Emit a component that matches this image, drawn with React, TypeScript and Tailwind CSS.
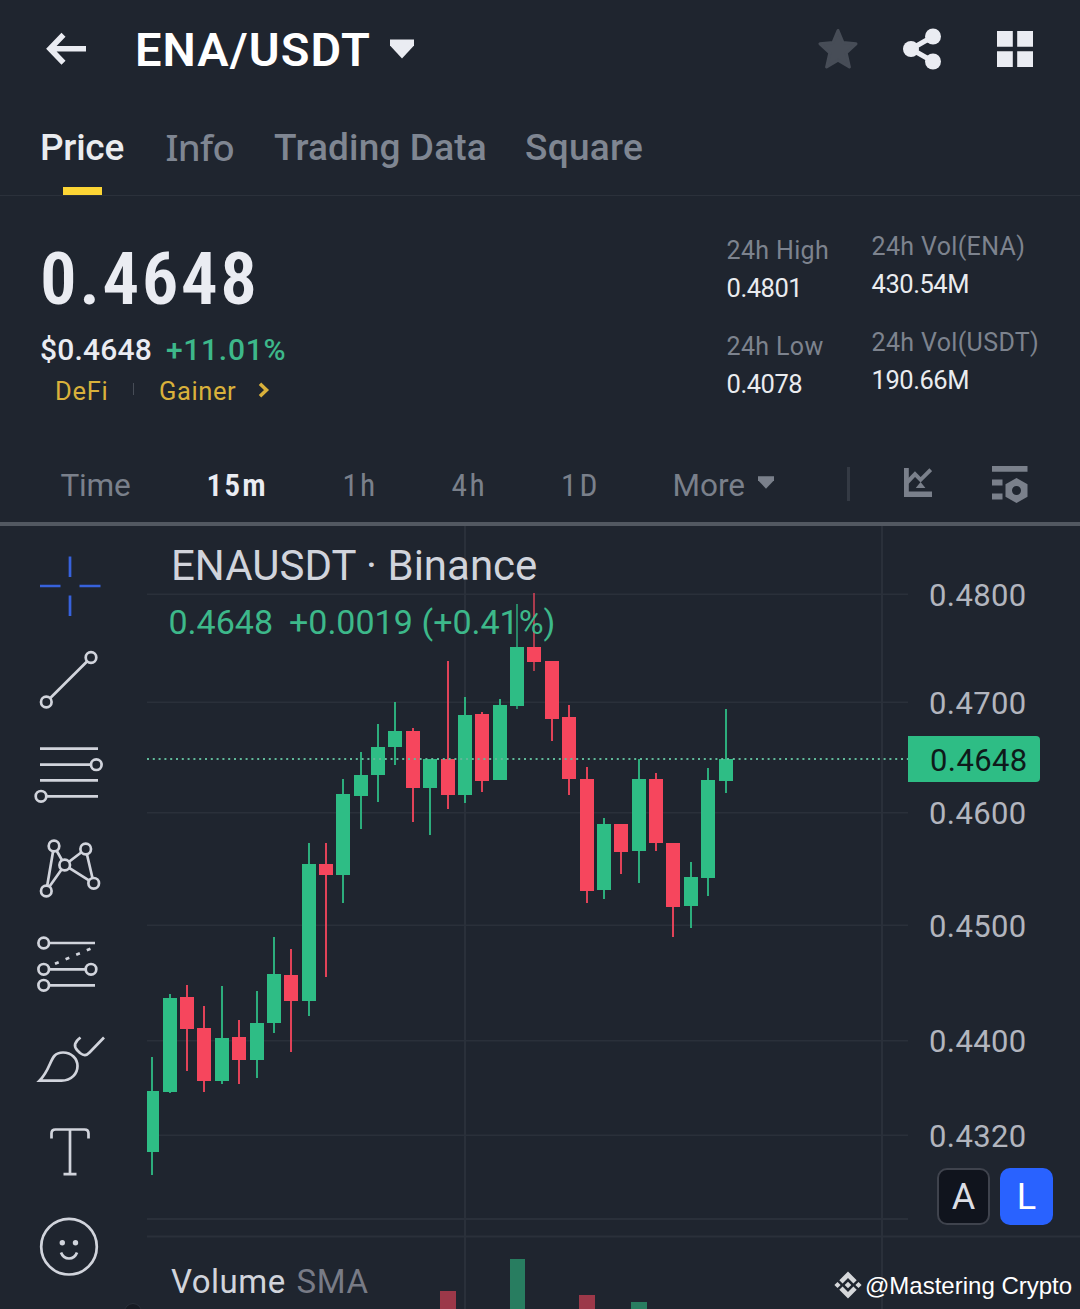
import type { ReactNode } from 'react';

const GREEN = '#2ebd85';
const RED = '#f6465d';

/* [centre x, wick top, body top, body bottom, wick bottom, rising] */
type Candle = [number, number, number, number, number, boolean];

const candles: Candle[] = [
  [152, 1057, 1091, 1152, 1175, true],
  [170, 994, 998, 1092, 1093, true],
  [187, 985, 997, 1029, 1071, false],
  [204, 1006, 1028, 1081, 1092, false],
  [222, 986, 1038, 1081, 1084, true],
  [239, 1020, 1037, 1060, 1084, false],
  [257, 991, 1023, 1060, 1078, true],
  [274, 937, 974, 1023, 1033, true],
  [291, 949, 975, 1001, 1052, false],
  [309, 843, 864, 1001, 1016, true],
  [326, 843, 864, 875, 977, false],
  [343, 779, 794, 875, 903, true],
  [361, 752, 775, 796, 829, true],
  [378, 724, 747, 775, 802, true],
  [395, 702, 731, 747, 765, true],
  [413, 728, 731, 788, 822, false],
  [430, 759, 759, 788, 835, true],
  [448, 661, 759, 795, 809, false],
  [465, 697, 715, 795, 803, true],
  [482, 712, 714, 781, 792, false],
  [500, 699, 705, 780, 780, true],
  [517, 604, 647, 706, 709, true],
  [534, 593, 647, 662, 671, false],
  [552, 661, 661, 719, 741, false],
  [569, 705, 717, 779, 795, false],
  [587, 767, 779, 891, 903, false],
  [604, 818, 824, 890, 899, true],
  [621, 824, 824, 852, 874, false],
  [639, 759, 779, 851, 883, true],
  [656, 773, 779, 843, 851, false],
  [673, 843, 843, 907, 937, false],
  [691, 862, 877, 906, 928, true],
  [708, 768, 780, 878, 896, true],
  [726, 709, 759, 781, 793, true],
];

const axis = [
  { y: 593.5, label: '0.4800' },
  { y: 701.5, label: '0.4700' },
  { y: 812, label: '0.4600' },
  { y: 924.5, label: '0.4500' },
  { y: 1040, label: '0.4400' },
  { y: 1134.5, label: '0.4320' },
];

const volumes = [
  { x: 440, y: 1291, w: 16, color: RED },
  { x: 510, y: 1259, w: 15, color: GREEN },
  { x: 579, y: 1295, w: 16, color: RED },
  { x: 631, y: 1302, w: 16, color: GREEN },
];

function Caret({ className }: { className: string }) {
  return (
    <svg className={className} viewBox="0 0 24 20" preserveAspectRatio="none" fill="currentColor">
      <path d="M0 .5h24v6L12 19.5 0 6.500z" />
    </svg>
  );
}

function Header() {
  return (
    <header className="flex h-[98px] shrink-0 items-center text-[#eaecf2]">
      <svg className="ml-[46px] h-[34px] w-10" viewBox="0 0 40 34" fill="none" stroke="currentColor" strokeWidth="5.600">
        <path d="M17.500 2.700 4 16.700l13.500 14M4 16.700h36" />
      </svg>
      <h1 className="mt-px ml-[49px] w-[238px] whitespace-nowrap text-[47px] leading-[60px] font-semibold tracking-[1.100px] text-white">
        ENA/USDT
      </h1>
      <Caret className="ml-[16.500px] h-5 w-6" />
      <svg className="ml-[404.500px] h-[42px] w-10 text-[#474d57]" viewBox="0 0 40 42" fill="currentColor" stroke="currentColor" strokeWidth="3" strokeLinejoin="round">
        <path d="m20 2.500 5 12 13 1.300-9.800 9 3.200 14.200L20 32.300 8.600 39l3.200-14.200-9.800-9L15 14.500z" />
      </svg>
      <svg className="ml-[44.500px] h-[42px] w-[38px]" viewBox="0 0 38 42" fill="currentColor">
        <path d="M30 8.500 8 21l22 12.500" fill="none" stroke="currentColor" strokeWidth="5" />
        <circle cx="8" cy="21" r="8" />
        <circle cx="30" cy="8.500" r="8" />
        <circle cx="30" cy="33.500" r="8" />
      </svg>
      <svg className="ml-[56px] h-9 w-9" viewBox="0 0 36 36" fill="currentColor">
        <path d="M0 0h15.800v15.800H0zM20.200 0H36v15.800H20.200zM0 20.200h15.800V36H0zM20.200 20.200H36V36H20.200z" />
      </svg>
    </header>
  );
}

function Tabs() {
  return (
    <nav className="flex h-[98px] shrink-0 border-b border-[#2b313b] text-[37px] leading-[99px] font-medium whitespace-nowrap text-[#7f8692]">
      <div className="relative ml-[40px] w-[125.500px] tracking-[-0.250px] text-[#eaecef]">
        Price
        <span className="absolute bottom-0 left-[23px] h-2 w-[39px] bg-[#fcd535]" />
      </div>
      <div className="w-[108.500px] font-['Noto_Sans',sans-serif] text-[36.500px] leading-[98px] tracking-[-0.600px]">Info</div>
      <div className="w-[251px] tracking-[0.150px]">Trading Data</div>
      <div className="tracking-[0.300px]">Square</div>
    </nav>
  );
}

function Stat({ label, value }: { label: string; value: string }) {
  return (
    <div className="leading-[30px] whitespace-nowrap">
      <div className="text-[25px] tracking-[0.350px] text-[#7d838e]">{label}</div>
      <div className="mt-[7px] text-[25.500px] font-[450] tracking-[-0.450px] text-[#eaecef]">{value}</div>
    </div>
  );
}

function Summary() {
  return (
    <section className="flex h-[252px] shrink-0">
      <div className="w-[726.500px] pt-[47px] pl-10 whitespace-nowrap">
        <div className="text-[73px] leading-[72px] font-semibold tracking-[2.500px] text-[#eaecf2] [font-stretch:75%]">0.4648</div>
        <div className="mt-[15px] flex text-[30px] leading-10 font-medium">
          <span className="w-[126px] tracking-[0.200px] text-[#eaecf2]">$0.4648</span>
          <span className="tracking-[0.700px] text-[#3db88a]">+11.01%</span>
        </div>
        <div className="mt-[5px] flex items-center text-[25.500px] leading-8 text-[#d9b13b]">
          <span className="ml-[15px] w-[78px] tracking-[0.700px]">DeFi</span>
          <span className="mb-1 h-3 w-px bg-[#474d57]" />
          <span className="ml-[25px] w-[98px] tracking-[0.600px]">Gainer</span>
          <svg className="mb-0.5 ml-px h-4 w-3" viewBox="0 0 12 16" fill="none" stroke="currentColor" strokeWidth="3.500">
            <path d="m2 1.800 6.500 6.200L2 14.200" />
          </svg>
        </div>
      </div>
      <div className="flex w-[145px] flex-col gap-[29px] pt-10">
        <Stat label="24h High" value="0.4801" />
        <Stat label="24h Low" value="0.4078" />
      </div>
      <div className="flex flex-col gap-[29px] pt-9">
        <Stat label="24h Vol(ENA)" value="430.54M" />
        <Stat label="24h Vol(USDT)" value="190.66M" />
      </div>
    </section>
  );
}

function Intervals() {
  return (
    <nav className="flex h-[78px] shrink-0 items-center border-b-4 border-[#525861] pt-0.5 pl-[60.500px] text-[31.500px] leading-10 whitespace-nowrap text-[#7a808b]">
      <span className="w-[146px] tracking-[-0.200px]">Time</span>
      <span className="w-[136px] font-semibold tracking-[2px] text-[#eaecf2] [font-stretch:75%]">15m</span>
      <span className="w-[109px] tracking-[2px] [font-stretch:75%]">1h</span>
      <span className="w-[109.500px] tracking-[2.500px] [font-stretch:75%]">4h</span>
      <span className="w-[111.500px] tracking-[3px] [font-stretch:75%]">1D</span>
      <span className="w-[85.500px]">More</span>
      <Caret className="mb-2 h-[13px] w-4" />
      <span className="mb-1 ml-[73px] h-[34px] w-[3px] bg-[#343a44]" />
      <svg className="mb-2 ml-[53.500px] h-[29px] w-7" viewBox="0 0 28 29" fill="currentColor">
        <path d="M0 0h4.800v23.500H28V29H0z" />
        <path d="m3 14.500 8-8.300 5.600 5.600L26.800 1.700" fill="none" stroke="currentColor" strokeWidth="4" />
        <path d="m16.600 14 4.800 6h-9.600z" />
      </svg>
      <svg className="mb-1 ml-[60px] h-[37px] w-9" viewBox="0 0 36 37" fill="currentColor">
        <path d="M0 0h35.500v5.700H0zM0 13.500h10.500v6H0zM0 27.500h10.500v6H0z" />
        <path fillRule="evenodd" d="m24.500 12 11 6.200v12.600l-11 6.200-11-6.200V18.200zm0 8a4.500 4.500 0 1 0 0 9 4.500 4.500 0 0 0 0-9z" />
      </svg>
    </nav>
  );
}

function Dot({ x, y }: { x: number; y: number }) {
  return <circle cx={x} cy={y} r="5.300" fill="#1f252f" />;
}

const tools: ReactNode[] = [
  <path key="cross" stroke="#3762dc" d="M40 586h20.500M79.500 586h21M70 556.500V577M70 595.500V616" />,
  <g key="trend">
    <path d="m46.300 702 44.700-44.500" />
    <Dot x={46.3} y={702} />
    <Dot x={91} y={657.5} />
  </g>,
  <g key="levels">
    <path d="M40 748.700h58M40 764.700h56M40 780.300h58M41 796.300h57" />
    <Dot x={96.3} y={764.7} />
    <Dot x={41} y={796.3} />
  </g>,
  <g key="pattern">
    <path d="m46.300 891 7.700-45 10.700 19 21-16 8 34.300-29-18.300z" />
    <Dot x={46.3} y={891} />
    <Dot x={54} y={846} />
    <Dot x={64.7} y={865} />
    <Dot x={85.7} y={849} />
    <Dot x={93.7} y={883.3} />
  </g>,
  <g key="projection">
    <path d="M44 943h51M44 969.300h47M44 985.300h51" />
    <path d="M55 963.700 91 948.500" strokeDasharray="4 7.500" />
    <Dot x={43.7} y={943} />
    <Dot x={43.7} y={969.3} />
    <Dot x={91} y={969.3} />
    <Dot x={43.7} y={985.3} />
  </g>,
  <g key="brush">
    <path d="M39.500 1080.700C53 1067 49 1052.500 63 1052.500c8.500 0 14.500 6 14.500 13.500s-6 14.700-16 14.700z" />
    <path d="M80.500 1037.500c-6 4.500-7 8.500-3.500 12.500l3 3c4 3 6 3 9.500-.5l14.500-15" />
  </g>,
  <path key="text" d="M51.500 1138.500v-5q0-4 4-4h29q4 0 4 4v5M70 1129.500V1174M63.500 1174.200h13" />,
  <g key="emoji">
    <circle cx="69" cy="1246.700" r="27.800" />
    <circle cx="62.300" cy="1242.700" r="2.700" fill="currentColor" stroke="none" />
    <circle cx="75.500" cy="1242.700" r="2.700" fill="currentColor" stroke="none" />
    <path d="M61 1252.500c3 8 13 8 16 0" />
  </g>,
];

function ToolRail() {
  return (
    <aside className="relative flex w-[147px] shrink-0 flex-col overflow-hidden pt-[13px] text-[#d1d4dc]">
      {tools.map((tool, i) => (
        <svg key={i} className="h-[95px] w-[147px] shrink-0" viewBox={`0 ${539 + 95 * i} 147 95`} fill="none" stroke="currentColor" strokeWidth="2.700">
          {tool}
        </svg>
      ))}
      <span className="absolute top-[777px] left-[124px] size-[18px] rounded-full border border-[#2b313b] bg-[#171b23]" />
    </aside>
  );
}

function Chart() {
  return (
    <div className="relative flex-1">
      <svg className="block h-[783px] w-[933px]" viewBox="147 526 933 783">
        <g fill="#2a303a">
          {axis.map((a) => (
            <rect key={a.label} x="147" y={a.y} width="761" height="1.500" />
          ))}
          <rect x="147" y="1218" width="761" height="2" />
          <rect x="147" y="1235.500" width="933" height="2" />
          <rect x="464" y="526" width="2" height="783" />
          <rect x="881" y="526" width="2" height="783" />
        </g>
        {volumes.map((v) => (
          <rect key={v.x} x={v.x} y={v.y} width={v.w} height={1309 - v.y} fill={v.color} opacity="0.580" />
        ))}
        {candles.map(([x, high, top, bottom, low, up]) => {
          const left = Math.max(147, x - 7);
          return (
            <g key={x} fill={up ? GREEN : RED}>
              <rect x={x - 1} y={high} width="2" height={low - high} opacity={high < 650 ? 0.65 : 0.9} />
              <rect x={left} y={top} width={x + 7 - left} height={bottom - top} />
            </g>
          );
        })}
        <path d="M147 759h761" stroke="#5fb898" strokeWidth="2" strokeDasharray="2 3.800" />
        <path d="M908 736h128q4 0 4 4v38q0 4-4 4H908z" fill={GREEN} />
        <g fontSize="31" letterSpacing="0.400" fill="#b2b5be">
          {axis.map((a) => (
            <text key={a.label} x="929" y={Math.round(a.y + 12)}>{a.label}</text>
          ))}
          <text x="930" y="771" fill="#0e1a1a">0.4648</text>
        </g>
      </svg>
      <div className="absolute top-[15px] left-[24px] whitespace-nowrap">
        <div className="text-[42px] leading-[50px] text-[#d1d4dc]">ENAUSDT · Binance</div>
        <div className="mt-[6px] -ml-[2.500px] flex text-[34px] leading-[50px] text-[#3db88a]">
          <span className="w-[120.500px]">0.4648</span>
          <span className="w-[132.500px]">+0.0019</span>
          <span>(+0.41%)</span>
        </div>
      </div>
      <div className="absolute top-[736px] left-[24px] flex text-[33px] leading-10 whitespace-nowrap">
        <span className="w-[125.500px] tracking-[0.500px] text-[#d1d4dc]">Volume</span>
        <span className="tracking-[0.650px] text-[#787b86]">SMA</span>
      </div>
      <div className="absolute top-[642px] left-[790px] flex gap-2.5 text-[36px] leading-none text-white">
        <span className="flex h-[57px] w-[53px] items-center justify-center rounded-[10px] border-2 border-[#3f434d] bg-[#10141d] text-[#dcdee5]">A</span>
        <span className="flex h-[57px] w-[53px] items-center justify-center rounded-[10px] bg-[#2962ff]">L</span>
      </div>
      <div className="absolute top-[745px] left-[687px] flex items-center whitespace-nowrap text-white">
        <svg className="mb-0.5 h-7 w-7 text-[#d5d7da]" viewBox="0 0 28 28" fill="currentColor">
          <path d="m14 .5 8.700 8.700-3.300 3.300L14 7.100l-5.400 5.400-3.300-3.300zM14 27.500l8.700-8.700-3.300-3.300L14 20.900l-5.400-5.400-3.300 3.300zM14 10.700l3.300 3.300-3.300 3.300-3.300-3.300zM3.500 10.900 6.600 14l-3.100 3.100L.4 14zM24.500 10.900l3.100 3.100-3.100 3.100-3.100-3.100z" />
        </svg>
        <span className="ml-[3px] font-['Liberation_Sans',sans-serif] text-[24px] leading-[30px]">@Mastering Crypto</span>
      </div>
    </div>
  );
}

export default function App() {
  return (
    <main className="flex h-[1309px] w-[1080px] flex-col overflow-hidden bg-[#1f252f] font-['Roboto',sans-serif]">
      <Header />
      <Tabs />
      <Summary />
      <Intervals />
      <div className="flex min-h-0 flex-1">
        <ToolRail />
        <Chart />
      </div>
    </main>
  );
}
